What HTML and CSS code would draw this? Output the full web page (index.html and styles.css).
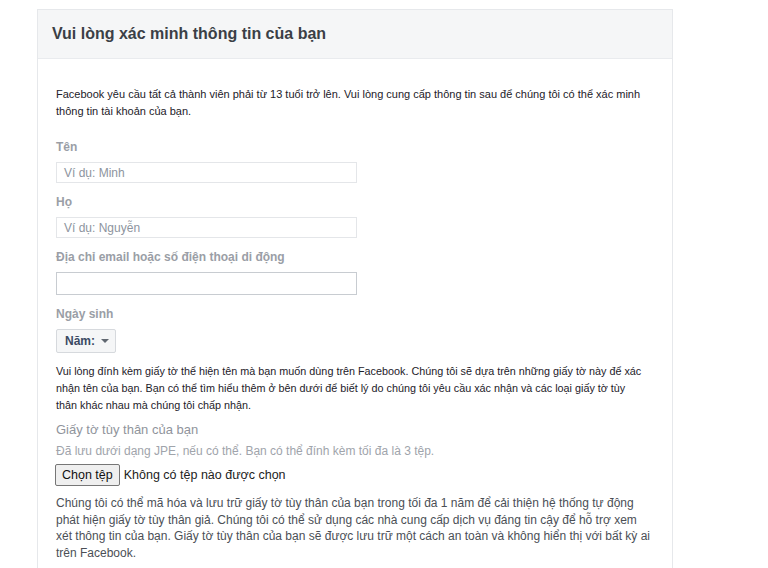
FILE: index.html
```html
<!DOCTYPE html>
<html lang="vi">
<head>
<meta charset="utf-8">
<link rel="stylesheet" href="styles.css">
</head>
<body>
<div class="card">
  <div class="card-header">Vui lòng xác minh thông tin của bạn</div>
  <div class="card-body">
    <p class="intro">Facebook yêu cầu tất cả thành viên phải từ 13 tuổi trở lên. Vui lòng cung cấp thông tin sau để chúng tôi có thể xác minh thông tin tài khoản của bạn.</p>

    <div class="field">
      <label class="label">Tên</label>
      <div class="input"><span class="ph">Ví dụ: Minh</span></div>
    </div>
    <div class="field">
      <label class="label">Họ</label>
      <div class="input"><span class="ph">Ví dụ: Nguyễn</span></div>
    </div>
    <div class="field">
      <label class="label">Địa chỉ email hoặc số điện thoại di động</label>
      <div class="input input-dark"></div>
    </div>
    <div class="field">
      <label class="label">Ngày sinh</label>
      <div class="select">Năm: <span class="caret"></span></div>
    </div>

    <p class="para2">Vui lòng đính kèm giấy tờ thể hiện tên mà bạn muốn dùng trên Facebook. Chúng tôi sẽ dựa trên những giấy tờ này để xác nhận tên của bạn. Bạn có thể tìm hiểu thêm ở bên dưới để biết lý do chúng tôi yêu cầu xác nhận và các loại giấy tờ tùy thân khác nhau mà chúng tôi chấp nhận.</p>

    <div class="id-title">Giấy tờ tùy thân của bạn</div>
    <div class="id-sub">Đã lưu dưới dạng JPE, nếu có thể. Bạn có thể đính kèm tối đa là 3 tệp.</div>
    <div class="file-row">
      <span class="file-btn">Chọn tệp</span>
      <span class="file-none">Không có tệp nào được chọn</span>
    </div>

    <p class="para3">Chúng tôi có thể mã hóa và lưu trữ giấy tờ tùy thân của bạn trong tối đa 1 năm để cải thiện hệ thống tự động phát hiện giấy tờ tùy thân giả. Chúng tôi có thể sử dụng các nhà cung cấp dịch vụ đáng tin cậy để hỗ trợ xem xét thông tin của bạn. Giấy tờ tùy thân của bạn sẽ được lưu trữ một cách an toàn và không hiển thị với bất kỳ ai trên Facebook.</p>
  </div>
</div>
</body>
</html>
```
FILE: styles.css
```css
html, body {
  margin: 0;
  padding: 0;
  background: #ffffff;
}
body {
  font-family: "Liberation Sans", Arial, sans-serif;
  padding: 9px 0 0 37px;
}
.card {
  width: 636px;
  border: 1px solid #e6e8eb;
  border-bottom: none;
  background: #fff;
  min-height: 600px;
  box-sizing: border-box;
}
.card-header {
  background: #f5f6f7;
  border-bottom: 1px solid #e9ebee;
  height: 48px;
  display: flex;
  align-items: center;
  padding-left: 14px;
  font-size: 16px;
  font-weight: bold;
  color: #3b3f46;
}
.card-body {
  padding: 27px 18px 0 18px;
}
.intro {
  margin: 0 0 19px 0;
  font-size: 11px;
  line-height: 17px;
  color: #1d2129;
}
.field {
  display: flex;
  flex-direction: column;
  align-items: flex-start;
  margin-bottom: 11px;
}
.label {
  font-size: 12px;
  line-height: 16px;
  font-weight: bold;
  color: #9a9ea6;
  margin-bottom: 7px;
}
.input {
  width: 301px;
  height: 21px;
  box-sizing: border-box;
  border: 1px solid #e4e6e9;
  display: flex;
  align-items: center;
  padding-left: 7px;
}
.input-dark {
  height: 23px;
  border-color: #c8ccd1;
}
.ph {
  font-size: 12px;
  color: #8d949e;
}
.select {
  display: flex;
  align-items: center;
  gap: 6px;
  height: 24px;
  box-sizing: border-box;
  padding: 0 8px;
  width: 60px;
  background: #f5f6f7;
  border: 1px solid #d6d9dd;
  border-radius: 2px;
  font-size: 12px;
  font-weight: bold;
  color: #3b4a63;
}
.caret {
  width: 0;
  height: 0;
  border-left: 4px solid transparent;
  border-right: 4px solid transparent;
  border-top: 4px solid #606770;
}
.para2 {
  margin: -1px 9px 7px 0;
  font-size: 10.8px;
  line-height: 17px;
  color: #1d2129;
}
.id-title {
  font-size: 13px;
  line-height: 18px;
  color: #90949c;
  margin-bottom: 4px;
}
.id-sub {
  font-size: 12px;
  line-height: 16px;
  color: #a0a4ab;
  margin-bottom: 5px;
}
.file-row {
  display: flex;
  align-items: center;
  gap: 4px;
  margin-left: -1px;
}
.file-btn {
  display: inline-flex;
  align-items: center;
  height: 22px;
  box-sizing: border-box;
  padding: 0 6px;
  border: 1px solid #767676;
  border-radius: 2px;
  background: #efefef;
  font-size: 12.5px;
  color: #111;
}
.file-none {
  font-size: 12.5px;
  color: #222;
}
.para3 {
  margin: 9px 0 0 0;
  font-size: 12px;
  line-height: 16.7px;
  color: #4b4f56;
}
```
